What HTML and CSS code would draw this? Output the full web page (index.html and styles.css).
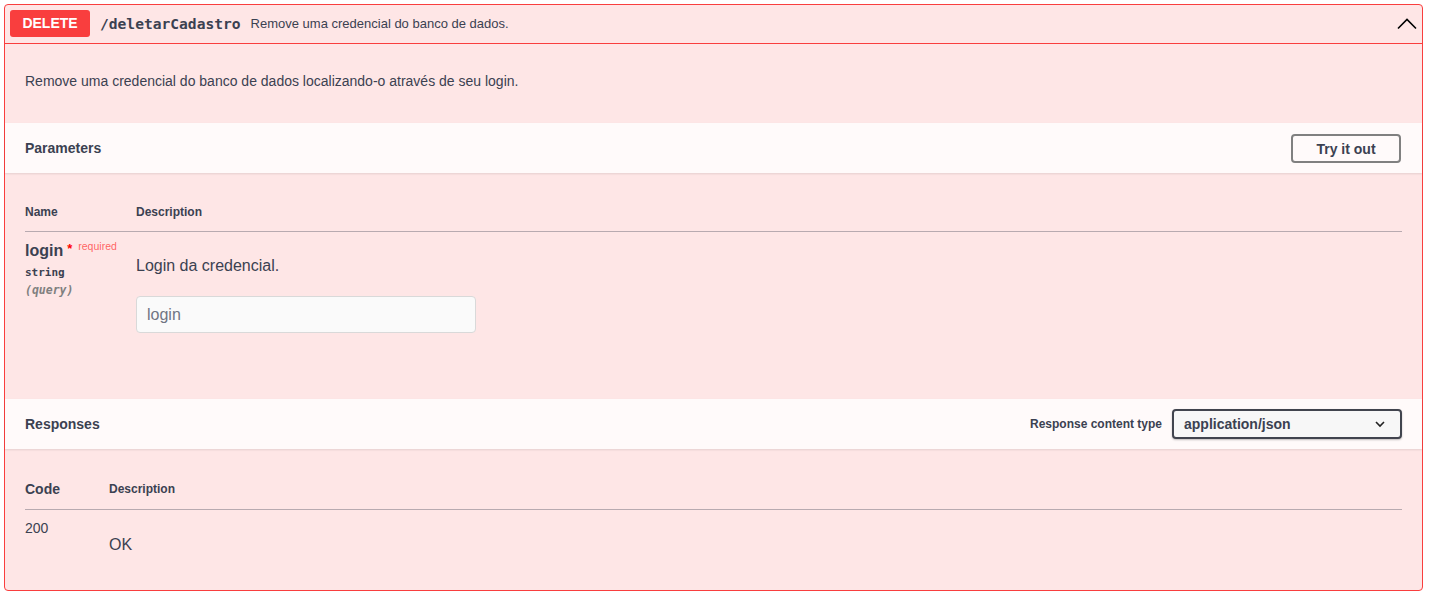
FILE: index.html
```html
<!DOCTYPE html>
<html lang="pt-BR">
<head>
    <meta charset="UTF-8">
    <meta name="viewport" content="width=device-width, initial-scale=1.0">
    <title>deletarCadastro</title>
    <link rel="stylesheet" href="styles.css">
</head>
<body>
    <div class="opblock opblock-delete">
        <div class="opblock-summary">
            <span class="method">DELETE</span>
            <span class="path">/deletarCadastro</span>
            <span class="summary-desc">Remove uma credencial do banco de dados.</span>
            <svg class="arrow" width="20" height="20" viewBox="0 0 20 20">
                <polyline points="1,14.5 10,5.5 19,14.5" fill="none" stroke="#000" stroke-width="1.6"/>
            </svg>
        </div>

        <div class="opblock-body">
            <div class="description">
                <p>Remove uma credencial do banco de dados localizando-o através de seu login.</p>
            </div>

            <div class="section-header">
                <h4>Parameters</h4>
                <button class="btn-try" type="button">Try it out</button>
            </div>
            <div class="parameters">
                <table>
                    <thead>
                        <tr>
                            <th class="col-name">Name</th>
                            <th>Description</th>
                        </tr>
                    </thead>
                    <tbody>
                        <tr>
                            <td class="col-name">
                                <div class="param-name">login<span class="star">*</span><span class="required">required</span></div>
                                <div class="param-type">string</div>
                                <div class="param-in">(query)</div>
                            </td>
                            <td>
                                <p class="param-desc">Login da credencial.</p>
                                <input class="param-input" type="text" placeholder="login">
                            </td>
                        </tr>
                    </tbody>
                </table>
            </div>

            <div class="section-header">
                <h4>Responses</h4>
                <label class="content-type">
                    <span>Response content type</span>
                    <span class="select">
                        application/json
                        <svg width="12" height="12" viewBox="0 0 12 12">
                            <polyline points="2,4 6,8 10,4" fill="none" stroke="#222" stroke-width="1.6"/>
                        </svg>
                    </span>
                </label>
            </div>
            <div class="responses">
                <table>
                    <thead>
                        <tr>
                            <th class="col-code">Code</th>
                            <th class="col-desc">Description</th>
                        </tr>
                    </thead>
                    <tbody>
                        <tr>
                            <td class="col-code">200</td>
                            <td><p class="response-desc">OK</p></td>
                        </tr>
                    </tbody>
                </table>
            </div>
        </div>
    </div>
</body>
</html>
```

FILE: styles.css
```css
body {
    margin: 4px 6px 4px 4px;
    font-family: "Liberation Sans", Arial, sans-serif;
    color: #3b4151;
    background: #fff;
}
.opblock {
    border: 1px solid #f93e3e;
    border-radius: 4px;
    background: rgba(249, 62, 62, 0.13);
    height: 587px;
    box-sizing: border-box;
}
.opblock-summary {
    display: flex;
    align-items: center;
    padding: 5px 5px 6px;
    border-bottom: 1px solid #f93e3e;
}
.method {
    min-width: 80px;
    padding: 6px 0;
    font-size: 14px;
    font-weight: bold;
    text-align: center;
    color: #fff;
    background: #f93e3e;
    border-radius: 3px;
    line-height: 15px;
}
.path {
    padding: 0 10px;
    font-family: "DejaVu Sans Mono", monospace;
    font-size: 14.6px;
    font-weight: bold;
    color: #3b4151;
}
.summary-desc {
    flex: 1;
    font-size: 13px;
    color: #3b4151;
}
.arrow {
    margin-right: 0;
}
.description {
    padding: 15px 20px;
}
.description p {
    margin: 14px 0 19px;
    font-size: 14px;
}
.section-header {
    display: flex;
    align-items: center;
    justify-content: space-between;
    min-height: 50px;
    padding: 8px 20px;
    box-sizing: border-box;
    background: rgba(255, 255, 255, 0.8);
    box-shadow: 0 1px 2px rgba(0, 0, 0, 0.1);
}
.section-header h4 {
    margin: 0;
    font-size: 14px;
    font-weight: bold;
}
.btn-try {
    padding: 5px 23px;
    font-family: inherit;
    font-size: 14px;
    font-weight: bold;
    color: #3b4151;
    background: transparent;
    border: 2px solid #808080;
    border-radius: 4px;
    height: 29px;
    width: 110px;
    margin-right: 1px;
}
table {
    width: 100%;
    border-collapse: collapse;
}
th {
    text-align: left;
    font-size: 12px;
    font-weight: bold;
    padding: 12px 0;
    border-bottom: 1px solid rgba(59, 65, 81, 0.2);
}
td {
    vertical-align: top;
    padding: 10px 0;
}
.parameters {
    padding: 20px 20px 56px;
}
.col-name {
    width: 111px;
}
.param-name {
    font-size: 16px;
    font-weight: bold;
}
.star {
    color: red;
    font-size: 13px;
    margin-left: 4px;
    position: relative;
    top: -3px;
}
.required {
    color: rgba(255, 0, 0, 0.6);
    font-size: 10.5px;
    font-weight: normal;
    margin-left: 6px;
    position: relative;
    top: -6px;
}
.param-type {
    font-family: "DejaVu Sans Mono", monospace;
    font-size: 11px;
    font-weight: 600;
    margin-top: 6px;
}
.param-in {
    font-family: "DejaVu Sans Mono", monospace;
    font-size: 11.5px;
    font-style: italic;
    font-weight: 600;
    color: #808080;
    margin-top: 4px;
}
.param-desc {
    margin: 15px 0 21px;
    font-size: 16px;
}
.param-input {
    width: 340px;
    height: 37px;
    box-sizing: border-box;
    padding: 8px 10px;
    font-family: inherit;
    font-size: 16px;
    background: #fafafa;
    border: 1px solid #d9d9d9;
    border-radius: 4px;
}
.param-input::placeholder {
    color: #707583;
}
.content-type {
    display: flex;
    align-items: center;
    gap: 10px;
    font-size: 12px;
    font-weight: bold;
}
.select {
    display: flex;
    align-items: center;
    justify-content: space-between;
    width: 230px;
    height: 30px;
    box-sizing: border-box;
    padding: 0 14px 0 10px;
    font-size: 14px;
    font-weight: bold;
    background: #f7f7f7;
    border: 2px solid #41444e;
    border-radius: 4px;
    box-shadow: 0 1px 2px rgba(0, 0, 0, 0.25);
}
.responses {
    padding: 20px 20px 0;
}
.responses th {
    padding: 12px 0;
}
.col-code {
    width: 84px;
}
th.col-code {
    font-size: 14px;
}
.responses td.col-code {
    font-size: 14px;
    padding-top: 10px;
}
.response-desc {
    margin: 16px 0 0;
    font-size: 16px;
}
```
